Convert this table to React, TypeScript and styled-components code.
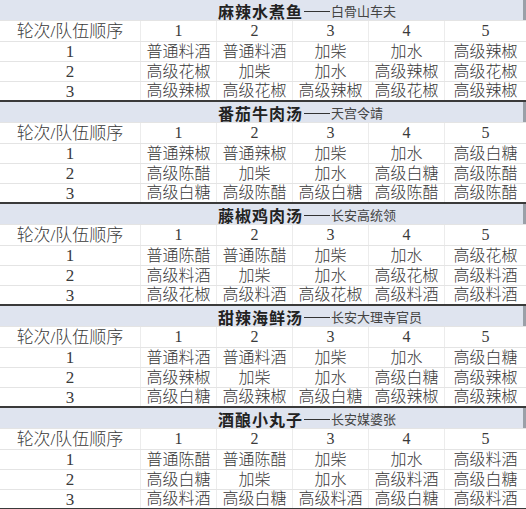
import React from "react";
import styled, { createGlobalStyle } from "styled-components";

type Dish = {
  name: string;
  chef: string;
  rows: string[][];
};

const dishes: Dish[] = [
  {
    name: "麻辣水煮鱼",
    chef: "白骨山车夫",
    rows: [
      ["普通料酒", "普通料酒", "加柴", "加水", "高级辣椒"],
      ["高级花椒", "加柴", "加水", "高级辣椒", "高级花椒"],
      ["高级辣椒", "高级花椒", "高级辣椒", "高级花椒", "高级辣椒"],
    ],
  },
  {
    name: "番茄牛肉汤",
    chef: "天宫令靖",
    rows: [
      ["普通辣椒", "普通辣椒", "加柴", "加水", "高级白糖"],
      ["高级陈醋", "加柴", "加水", "高级白糖", "高级陈醋"],
      ["高级白糖", "高级陈醋", "高级白糖", "高级陈醋", "高级陈醋"],
    ],
  },
  {
    name: "藤椒鸡肉汤",
    chef: "长安高统领",
    rows: [
      ["普通陈醋", "普通陈醋", "加柴", "加水", "高级花椒"],
      ["高级料酒", "加柴", "加水", "高级花椒", "高级料酒"],
      ["高级花椒", "高级料酒", "高级花椒", "高级料酒", "高级料酒"],
    ],
  },
  {
    name: "甜辣海鲜汤",
    chef: "长安大理寺官员",
    rows: [
      ["普通料酒", "普通料酒", "加柴", "加水", "高级白糖"],
      ["高级辣椒", "加柴", "加水", "高级白糖", "高级辣椒"],
      ["高级白糖", "高级辣椒", "高级白糖", "高级辣椒", "高级辣椒"],
    ],
  },
  {
    name: "酒酿小丸子",
    chef: "长安媒婆张",
    rows: [
      ["普通陈醋", "普通陈醋", "加柴", "加水", "高级料酒"],
      ["高级白糖", "加柴", "加水", "高级料酒", "高级白糖"],
      ["高级料酒", "高级白糖", "高级料酒", "高级白糖", "高级料酒"],
    ],
  },
];

const rowHeights = [20, 20, 19];

const GlobalStyle = createGlobalStyle`
  html, body {
    margin: 0;
    padding: 0;
    background: #ffffff;
  }
  body {
    font-family: "Liberation Serif", "Noto Sans CJK SC", serif;
    color: #333333;
  }
`;

const Sheet = styled.div`
  width: 526px;
  display: flex;
  flex-direction: column;
`;

const Section = styled.div`
  display: flex;
  flex-direction: column;
  border-bottom: 2px solid #3a3a3a;
`;

const TitleRow = styled.div`
  height: 20px;
  background: #dfe4ef;
  border-right: 3px solid #9aa0a8;
  display: flex;
  align-items: center;
  padding: 1px 0 0 218px;
  box-sizing: border-box;
  white-space: nowrap;
  line-height: 1;
`;

const DishName = styled.span`
  font-family: "Noto Sans CJK SC", sans-serif;
  font-weight: 700;
  font-size: 16px;
  line-height: 1;
  color: #222222;
  letter-spacing: 1px;
`;

const Dash = styled.span`
  display: inline-block;
  width: 26px;
  height: 1px;
  background: #333333;
  margin: 2px 1px 0 1px;
`;

const Chef = styled.span`
  font-family: "Noto Sans CJK SC", sans-serif;
  font-size: 13px;
  line-height: 1;
  color: #444444;
`;

const Row = styled.div<{ $h: number }>`
  height: ${(p) => p.$h}px;
  display: grid;
  grid-template-columns: 140px 76px 76px 76px 76px 82px;
  border-top: 1px solid #e4e4e4;
  box-sizing: border-box;
`;

const Cell = styled.div<{ $first?: boolean }>`
  display: flex;
  align-items: center;
  justify-content: center;
  font-size: ${(p) => (p.$first ? 17 : 16)}px;
  line-height: 1;
  color: #3a3a3a;
  white-space: nowrap;
  border-left: ${(p) => (p.$first ? "none" : "1px solid #ececec")};
  font-family: "Liberation Serif", "Noto Sans CJK SC", serif;
  font-weight: 300;
`;

const App = () => {
  return (
    <>
      <GlobalStyle />
      <Sheet>
        {dishes.map((dish) => (
          <Section key={dish.name}>
            <TitleRow>
              <DishName>{dish.name}</DishName>
              <Dash />
              <Chef>{dish.chef}</Chef>
            </TitleRow>
            <Row $h={21}>
              <Cell $first>轮次/队伍顺序</Cell>
              {[1, 2, 3, 4, 5].map((n) => (
                <Cell key={n}>{n}</Cell>
              ))}
            </Row>
            {dish.rows.map((row, i) => (
              <Row $h={rowHeights[i]} key={i}>
                <Cell $first>{i + 1}</Cell>
                {row.map((item, j) => (
                  <Cell key={j}>{item}</Cell>
                ))}
              </Row>
            ))}
          </Section>
        ))}
      </Sheet>
    </>
  );
};

export default App;
